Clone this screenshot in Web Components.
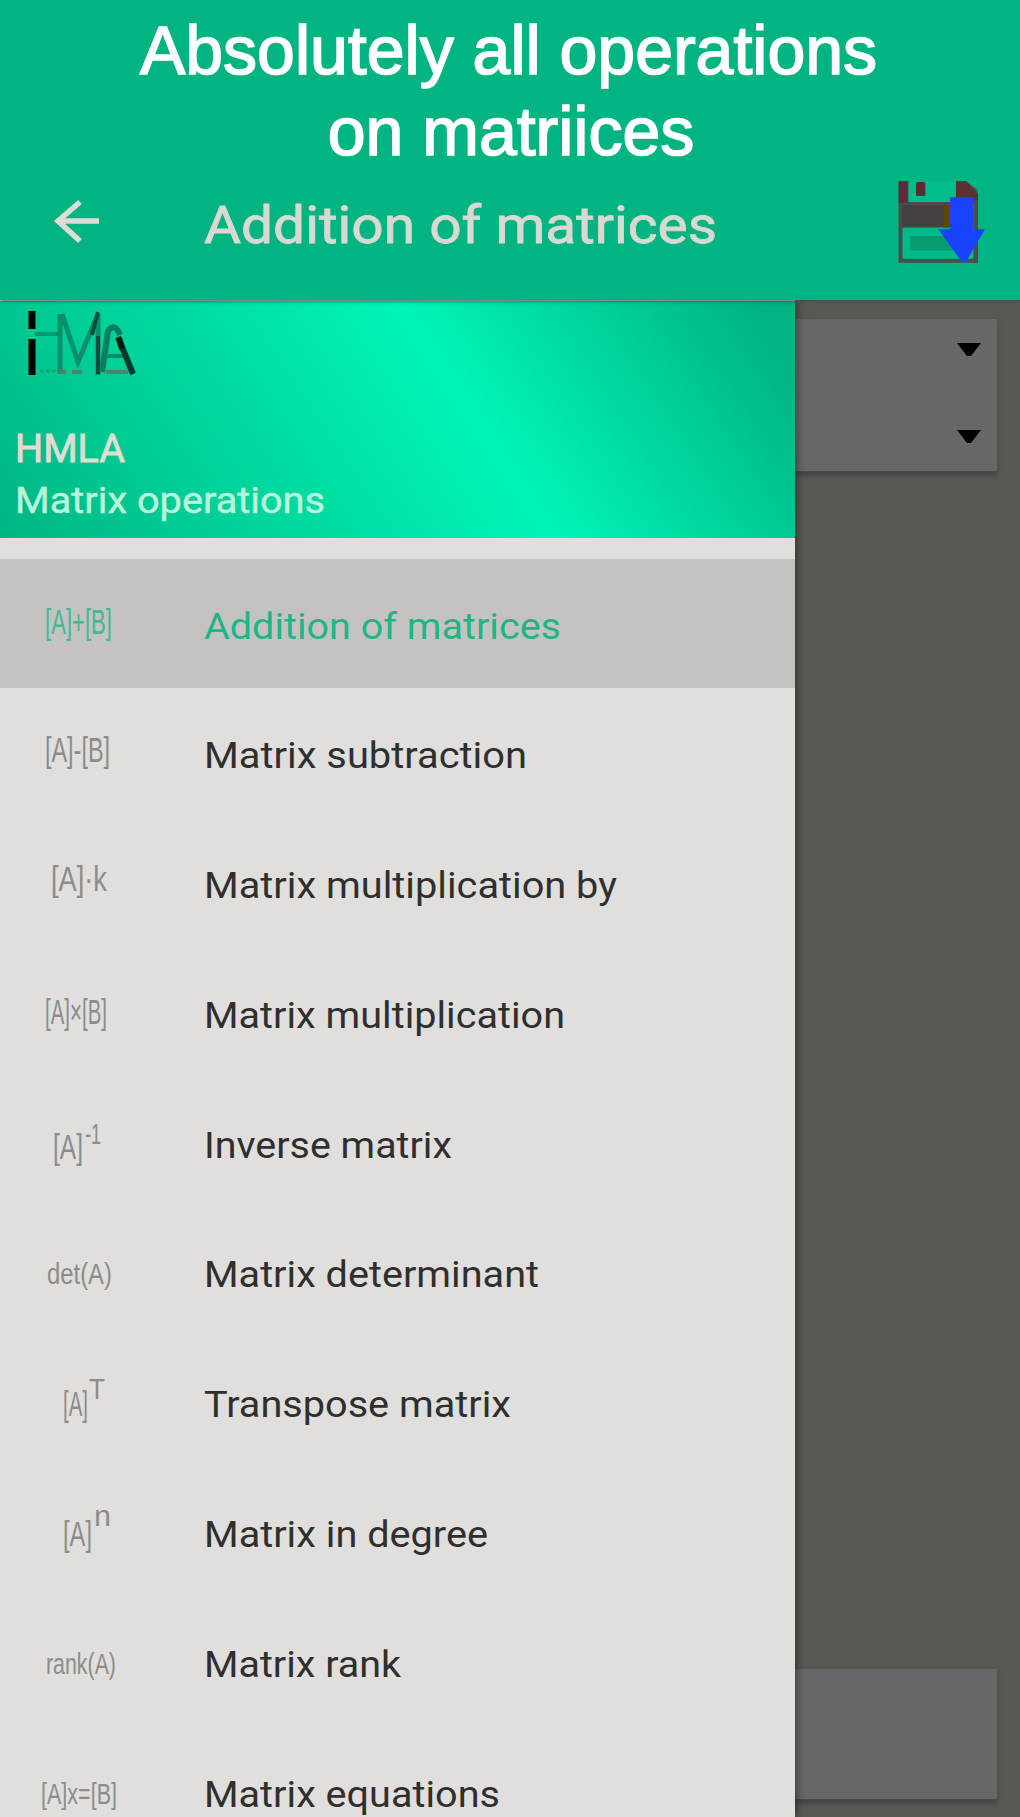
<!DOCTYPE html>
<html lang="en">
<head>
<meta charset="utf-8">
<title>HMLA</title>
<style>
html,body{margin:0;height:1817px;overflow:hidden;background:#595953;font-family:Roboto,"Liberation Sans",sans-serif}
</style>
</head>
<body>
<matrix-app></matrix-app>
<script>
const define = (name, html, ready) => customElements.define(name, class extends HTMLElement {
  constructor() {
    super();
    const t = document.createElement('template');
    t.innerHTML = html;
    this.attachShadow({ mode: 'open' }).append(t.content.cloneNode(true));
  }
  connectedCallback() { if (ready) ready(this, this.shadowRoot); }
});

// A single line of text, widened so that it spans the width given in `w`.
define('wide-text', `<style>:host{display:block;white-space:nowrap}span{display:inline-block;transform-origin:0 50%}</style><span><slot></slot></span>`, (el, root) => {
  const s = root.querySelector('span');
  s.style.transform = `scaleX(${Number(el.getAttribute('w')) / s.getBoundingClientRect().width})`;
});

define('promo-caption', `<style>
:host{display:flex;flex-direction:column;align-items:center;box-sizing:border-box;height:165px;padding:10px 3px 0 0;font:68px/81px "Liberation Sans",Arial,sans-serif;color:#fff;-webkit-text-stroke:1.6px #fff;white-space:nowrap}
::slotted(:last-child){padding-left:5px}
</style><slot></slot>`);

define('save-icon', `<style>:host{display:block;width:160px;height:140px}svg{display:block}</style>
<svg width="160" height="140" viewBox="0 0 480 420">
<rect x="146" y="94" width="140" height="62" fill="#00bd8b"/>
<path d="M116 94H145V156H270V232H128V326H342V232H352V120L318 94H288V140H354V338H116Z" fill="#4b4b49"/>
<path d="M288 94H318L354 132V160H288Z" fill="#5c3035"/>
<path d="M340 150H354V338H340Z" fill="#554650"/>
<path d="M116 94H143V158H116Z" fill="#5b2d3a"/>
<rect x="168" y="96" width="28" height="42" rx="5" fill="#592a31"/>
<path d="M128 166H264V232H128Z" fill="#443f40"/>
<rect x="128" y="236" width="212" height="89" fill="#00bb88"/>
<rect x="150" y="258" width="140" height="44" fill="#089b70"/>
<rect x="250" y="166" width="18" height="66" fill="#594800"/>
<path d="M270 142H340V238H375L318 335H305L235 238H270Z" fill="#1a43ff"/>
</svg>`);

define('app-toolbar', `<style>
:host{display:flex;align-items:flex-start;height:135px}
.back{display:block;width:204px;height:135px;flex:none}
wide-text{font-size:52px;line-height:60px;color:#d9d9d2;-webkit-text-stroke:.8px #d9d9d2;flex:1;padding-top:31px}
save-icon{margin-top:-15px}
</style>
<svg class="back" viewBox="0 165 204 135"><path d="M99 221H59M80 202L58 221L80 241" fill="none" stroke="#dddcd6" stroke-width="5.5"/></svg>
<wide-text w="513">Addition of matrices</wide-text>
<save-icon></save-icon>`);

define('drawer-header', `<style>
:host{display:flex;flex-direction:column;flex:none;box-sizing:border-box;height:237px;padding-left:15px;background:linear-gradient(56.6deg,#00b581 0%,#00f5b8 58.4%,#00b380 96%);color:#ddddd2}
svg{display:block;height:124px;width:150px;flex:none}
.name{font-size:38px;line-height:42px;margin-top:3px;-webkit-text-stroke:.9px #ddddd2}
.sub{font-size:37px;line-height:42px;margin-top:10px;color:#b9f3dc;-webkit-text-stroke:.5px #b9f3dc}
</style>
<svg viewBox="15 301 150 124" fill="none">
<path d="M35 334H60" stroke="#059a6d" stroke-width="4"/>
<path d="M60 314V374M62 314L78 362L98 314M98 314V375" stroke="#079069" stroke-width="5"/>
<path d="M98 312L92 335M98 336V374" stroke="#064f3c" stroke-width="4"/>
<path d="M102 372L108 331Q115 322 120 335" stroke="#07805e" stroke-width="6"/>
<path d="M106 356H124" stroke="#088b65" stroke-width="4"/>
<path d="M118 337L133 374" stroke="#02392a" stroke-width="6"/>
<path d="M119 338L122 349" stroke="#001a12" stroke-width="6"/>
<path d="M40 371H60" stroke="#07a879" stroke-width="3" stroke-dasharray="4 2"/>
<path d="M58 372H66M72 372H82M106 372H128" stroke="#4c8268" stroke-width="4"/>
<path d="M32 311V329M32 339V375" stroke="#000" stroke-width="7"/>
</svg>
<wide-text class="name" w="110">HMLA</wide-text>
<wide-text class="sub" w="310">Matrix operations</wide-text>`);

// Formula glyph of a row: base text from x1 to x2, optional superscript.
define('formula-icon', `<style>:host{display:block;width:204px;height:129.8px;flex:none}svg{display:block;overflow:visible}</style>
<svg width="204" height="129.8" viewBox="0 -2 204 129.8" font-family="Liberation Sans, Arial, sans-serif" fill="currentColor"></svg>`, (el, root) => {
  const svg = root.querySelector('svg');
  const add = (text, x1, x2, y, size) => {
    const t = document.createElementNS('http://www.w3.org/2000/svg', 'text');
    t.setAttribute('x', x1); t.setAttribute('y', y); t.setAttribute('font-size', size);
    t.setAttribute('textLength', x2 - x1); t.setAttribute('lengthAdjust', 'spacingAndGlyphs');
    t.textContent = text; svg.append(t);
  };
  add(...JSON.parse(el.dataset.base));
  if (el.dataset.sup) add(...JSON.parse(el.dataset.sup));
});

define('menu-item', `<style>
:host{display:flex;height:129.8px;color:#2f2f2f;flex:none}
:host([selected]){background:#c5c3c1;color:#1eb587}
.icon{color:#8c8c8a;display:block}
:host([selected]) .icon{color:#42b893}
.label{display:block;font-size:37px;line-height:42px;padding-top:47px}
</style><span class="icon"><slot name="icon"></slot></span><span class="label"><slot></slot></span>`);

const items = [
  ['Addition of matrices', 357, ['[A]+[B]', 45, 112, 73, 36]],
  ['Matrix subtraction', 323, ['[A]-[B]', 45, 110, 72, 36]],
  ['Matrix multiplication by', 413, ['[A]·k', 51, 107, 71, 36]],
  ['Matrix multiplication', 361, ['[A]×[B]', 45, 107, 74, 36]],
  ['Inverse matrix', 248, ['[A]', 53, 83, 79, 36], ['-1', 85, 101, 64, 29]],
  ['Matrix determinant', 335, ['det(A)', 47, 112, 75, 30]],
  ['Transpose matrix', 307, ['[A]', 63, 88, 77, 36], ['T', 89, 105, 60, 29]],
  ['Matrix in degree', 284, ['[A]', 63, 92, 77, 36], ['n', 94, 111, 57, 29]],
  ['Matrix rank', 197, ['rank(A)', 46, 116, 75, 30]],
  ['Matrix equations', 296, ['[A]x=[B]', 41, 117, 75, 30]],
];

define('nav-drawer', `<style>
:host{display:flex;flex-direction:column;width:795px;flex:none;background:#e0dfdd;box-shadow:0 0 10px rgba(0,0,0,.6);overflow:hidden}
.list{display:flex;flex-direction:column;padding-top:20.5px}
</style><drawer-header></drawer-header><div class="list">${items.map(([label, w, base, sup], i) =>
  `<menu-item${i ? '' : ' selected'}><formula-icon slot="icon" data-base='${JSON.stringify(base)}'${sup ? ` data-sup='${JSON.stringify(sup)}'` : ''}></formula-icon><wide-text w="${w}">${label}</wide-text></menu-item>`).join('')}</div>`);

define('content-card', `<style>
:host{display:flex;flex-direction:column;align-items:flex-end;box-sizing:border-box;background:#676767;box-shadow:0 5px 3px #484847,0 1px 5px #50504e}
</style><slot></slot>`);

define('content-pane', `<style>
:host{display:flex;flex-direction:column;justify-content:space-between;flex:1;box-sizing:border-box;padding:19px 23px 18px 0;background:#595953}
.top{height:152px;padding:23px 16px 0 0;gap:73px}
.bottom{height:130px}
svg{display:block}
</style>
<content-card class="top">
<svg width="24" height="14"><path d="M0 1H24L14 14H10Z"/></svg>
<svg width="24" height="14"><path d="M0 1H24L14 14H10Z"/></svg>
</content-card>
<content-card class="bottom"></content-card>`);

define('matrix-app', `<style>
:host{display:flex;flex-direction:column;width:1020px;height:1817px;overflow:hidden}
header{display:flex;flex-direction:column;height:300px;flex:none;background:#02b481;box-shadow:0 1px 4px #24594c;z-index:1}
main{display:flex;height:1517px;flex:none}
nav-drawer{z-index:0;padding-top:1px;box-sizing:border-box}
</style>
<header><promo-caption><div>Absolutely all operations</div><div>on matriices</div></promo-caption><app-toolbar></app-toolbar></header>
<main><nav-drawer></nav-drawer><content-pane></content-pane></main>`);
</script>
</body>
</html>
